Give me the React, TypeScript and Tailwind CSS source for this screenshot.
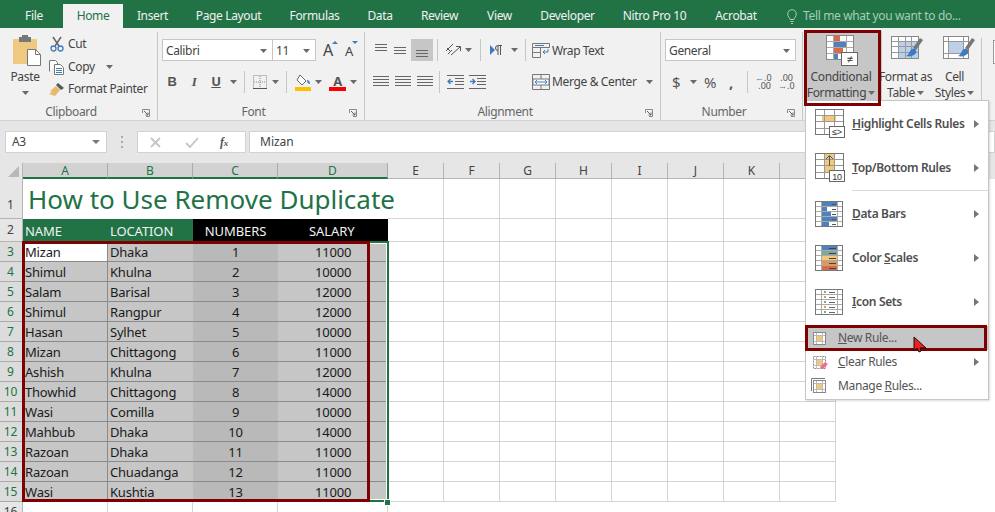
import { ReactNode } from 'react';

const UI = "font-['Noto_Sans','Open_Sans',sans-serif]";

const tabs = [
  { label: 'File', w: 'w-[58px]' },
  { label: 'Home', w: 'w-[60px]', active: true },
  { label: 'Insert', w: 'w-[59px]' },
  { label: 'Page Layout', w: 'w-[93px]' },
  { label: 'Formulas', w: 'w-[79px]' },
  { label: 'Data', w: 'w-[52px]' },
  { label: 'Review', w: 'w-[67px]' },
  { label: 'View', w: 'w-[53px]' },
  { label: 'Developer', w: 'w-[83px]' },
  { label: 'Nitro Pro 10', w: 'w-[91px]' },
  { label: 'Acrobat', w: 'w-[72px]' },
];

const rows = [
  ['Mizan', 'Dhaka', '1', '11000'],
  ['Shimul', 'Khulna', '2', '10000'],
  ['Salam', 'Barisal', '3', '12000'],
  ['Shimul', 'Rangpur', '4', '12000'],
  ['Hasan', 'Sylhet', '5', '10000'],
  ['Mizan', 'Chittagong', '6', '11000'],
  ['Ashish', 'Khulna', '7', '12000'],
  ['Thowhid', 'Chittagong', '8', '14000'],
  ['Wasi', 'Comilla', '9', '10000'],
  ['Mahbub', 'Dhaka', '10', '14000'],
  ['Razoan', 'Dhaka', '11', '11000'],
  ['Razoan', 'Chuadanga', '12', '11000'],
  ['Wasi', 'Kushtia', '13', '11000'],
];

const extraCols = ['E', 'F', 'G', 'H', 'I', 'J', 'K', 'L'];

const Caret = ({ className = '' }: { className?: string }) => (
  <svg width="7" height="4" viewBox="0 0 7 4" className={`shrink-0 ${className}`}>
    <path d="M0 0h7L3.5 4z" fill="#6a6a6a" />
  </svg>
);

const Sep = ({ className = '' }: { className?: string }) => <div className={`w-px h-[22px] bg-[#c6c6c6] shrink-0 ${className}`} />;

const Launcher = () => (
  <svg width="8" height="8" viewBox="0 0 8 8" className="absolute right-[7px] bottom-[3px]">
    <path d="M.5 4V.5H7.5V7.5H4" fill="none" stroke="#8a8a8a" />
    <path d="M2 2L6 6M6 3.5V6H3.5" fill="none" stroke="#666" />
  </svg>
);

// horizontal-lines icon used by the alignment buttons
const Lines = ({ rows: r }: { rows: [number, number][] }) => (
  <svg width="16" height="16" viewBox="0 0 16 16" className="shrink-0">
    {r.map(([x, y], i) => (
      <rect key={i} x={x} y={y} width={16 - x * (x > 0 && x < 3 ? 2 : 1)} height="1" fill="#666" />
    ))}
  </svg>
);

const Group = ({ w, label, children, launcher = true }: { w: string; label: string; children: ReactNode; launcher?: boolean }) => (
  <div className={`${w} relative h-[88px] border-r border-[#c6c6c6] flex flex-col shrink-0`}>
    <div className="flex-1 relative">{children}</div>
    <div className="h-[16px] pr-[15px] text-center text-[12px] leading-[15px] text-[#666]">{label}</div>
    {launcher && <Launcher />}
  </div>
);

const TableGrid = ({ fill }: { fill?: ReactNode }) => (
  <>
    <rect x=".5" y=".5" width="28" height="25" fill="#fff" stroke="#777" />
    {fill}
    <path d="M9.5 1v24M19.5 1v24M1 6.5h27M1 12.5h27M1 19.5h27" stroke="#999" fill="none" />
  </>
);

const MenuIcon = ({ kind }: { kind: string }) => {
  if (kind === 'highlight')
    return (
      <svg width="31" height="30" viewBox="0 0 31 30">
        <TableGrid fill={<rect x="7" y="7" width="14" height="6" fill="#f0c97e" />} />
        <rect x="14.5" y="17.5" width="15" height="11" fill="#fff" stroke="#666" />
        <text x="22" y="26" textAnchor="middle" fontSize="9" fill="#333" fontFamily="'Liberation Sans',sans-serif">≤&gt;</text>
      </svg>
    );
  if (kind === 'top')
    return (
      <svg width="31" height="30" viewBox="0 0 31 30">
        <TableGrid fill={<rect x="9" y="1" width="11" height="18" fill="#f0c97e" />} />
        <path d="M14.500 13V3M11 6l3.500-3.500L18 6" fill="none" stroke="#555" />
        <rect x="14.500" y="17.500" width="15" height="11" fill="#fff" stroke="#666" />
        <text x="22" y="26.500" textAnchor="middle" fontSize="9" fill="#333" fontFamily="'Liberation Sans',sans-serif">10</text>
      </svg>
    );
  if (kind === 'bars')
    return (
      <svg width="29" height="26" viewBox="0 0 29 26">
        <rect x=".5" y=".5" width="27" height="25" fill="#fff" stroke="#777" />
        {[[1, 15], [6, 5], [11, 9], [16, 15], [21, 7]].map(([y, w], i) => (
          <rect key={i} x="7" y={y} width={w} height="4" fill="#4f81bd" />
        ))}
        <path d="M6.500 1v24M22.500 1v24M1 5.500h26M1 10.500h26M1 15.500h26M1 20.500h26" stroke="#aaa" fill="none" />
        <path d="M17 3.500h4M17 8.500h4M17 13.500h4M17 18.500h4M17 23.500h4" stroke="#555" />
      </svg>
    );
  if (kind === 'scales')
    return (
      <svg width="29" height="26" viewBox="0 0 29 26">
        <rect x=".5" y=".5" width="27" height="25" fill="#fff" stroke="#777" />
        {['#4f81bd', '#7fa894', '#f0c97e', '#e8964a', '#d9694a'].map((c, i) => (
          <rect key={c} x="7" y={1 + i * 5} width="15" height="4" fill={c} />
        ))}
        <path d="M6.500 1v24M22.500 1v24M1 5.500h26M1 10.500h26M1 15.500h26M1 20.500h26" stroke="#aaa" fill="none" />
        <path d="M14 3.500h7M14 8.500h7M14 13.500h7M14 18.500h7M14 23.500h7" stroke="#444" />
      </svg>
    );
  return (
    <svg width="29" height="26" viewBox="0 0 29 26">
      <rect x=".5" y=".5" width="27" height="25" fill="#fff" stroke="#777" />
      <path d="M6.500 1v24M22.500 1v24M1 5.500h26M1 10.500h26M1 15.500h26M1 20.500h26" stroke="#aaa" fill="none" />
      {['#7fa894', '#e8964a', '#7fa894', '#e8964a', '#7fa894'].map((c, i) => (
        <rect key={i} x="9" y={2 + i * 5} width="2" height="2" fill={c} />
      ))}
      <path d="M14 3.500h6M14 8.500h6M14 13.500h6M14 18.500h6M14 23.500h6" stroke="#666" />
    </svg>
  );
};

const SmallRuleIcon = ({ kind }: { kind: string }) => (
  <svg width="17" height="16" viewBox="0 0 17 16">
    {kind === 'manage' && <path d="M.5 13V.5H14" fill="none" stroke="#777" />}
    <rect x="2.500" y="2.500" width="12" height="12" fill="#fff" stroke="#888" strokeDasharray={kind === 'clear' ? '2 1' : undefined} />
    <path d="M5.500 3v11M11.500 3v11M3 5.500h11M3 11.500h11" stroke="#bbb" />
    <rect x="6" y="6" width="5" height="5" fill="#f0c97e" />
    {kind === 'clear' && <path d="M9 13l5-5 3 2-5 5h-2z" fill="#ee6f8c" />}
  </svg>
);

const MenuItem = ({ icon, first, rest }: { icon: string; first: ReactNode; rest: string }) => (
  <div className="h-[44px] flex items-center">
    <div className="w-[46px] pl-[9px] shrink-0"><MenuIcon kind={icon} /></div>
    <div className="flex-1 font-semibold text-[12px] text-[#4f4f4f] whitespace-nowrap">{first}{rest}</div>
    <svg width="5" height="8" viewBox="0 0 5 8" className="mr-[9px]"><path d="M0 0l5 4-5 4z" fill="#777" /></svg>
  </div>
);

const SmallItem = ({ kind, children, arrow, className = '' }: { kind: string; children: ReactNode; arrow?: boolean; className?: string }) => (
  <div className={`h-[24px] flex items-center ${className}`}>
    <div className="w-[32px] pl-[5px] shrink-0"><SmallRuleIcon kind={kind} /></div>
    <div className="flex-1 text-[12px]">{children}</div>
    {arrow && <svg width="5" height="8" viewBox="0 0 5 8" className="mr-[9px]"><path d="M0 0l5 4-5 4z" fill="#777" /></svg>}
  </div>
);

const Ribbon = () => (
  <div className="h-[93px] bg-[#f1f1f1] border-b border-[#d2d2d2] flex pt-[4px] text-[#444] overflow-hidden">
    {/* Clipboard */}
    <Group w="w-[158px]" label="Clipboard">
      <div className="absolute left-[10px] top-[3px] w-[30px] flex flex-col items-center">
        <svg width="30" height="31" viewBox="0 0 30 31" className="ml-[4px]">
          <rect x="1" y="4" width="24" height="25" rx="1" fill="#efc881" />
          <rect x="7" y="2" width="12" height="5" fill="#777" />
          <rect x="10" y="0" width="6" height="3" fill="#777" />
          <path d="M15.500 14.500h8l5 5v11h-13z" fill="#fff" stroke="#777" />
          <path d="M23.500 14.500v5h5" fill="none" stroke="#777" />
        </svg>
        <span className="text-[12px] leading-[16px] mt-[3px]">Paste</span>
        <Caret className="mt-[6px]" />
      </div>
      <div className="absolute left-[50px] top-[0px] h-[24px] flex items-center gap-[4px] text-[12px]">
        <svg width="14" height="16" viewBox="0 0 14 16">
          <path d="M3 1l6 9M11 1l-6 9" stroke="#666" strokeWidth="1.500" />
          <circle cx="3.500" cy="12.500" r="2.500" fill="none" stroke="#3f7cbf" strokeWidth="1.300" />
          <circle cx="10.500" cy="12.500" r="2.500" fill="none" stroke="#3f7cbf" strokeWidth="1.300" />
        </svg>
        Cut
      </div>
      <div className="absolute left-[49px] top-[23px] h-[24px] flex items-center text-[12px]">
        <svg width="16" height="15" viewBox="0 0 16 15">
          <path d="M.5 11.500V.5h6l2 2v2" fill="#fff" stroke="#777" />
          <path d="M5.500 4.500h6l3 3v7h-9z" fill="#fff" stroke="#777" />
          <path d="M7 8.500h6M7 10.500h6M7 12.500h6" stroke="#3f7cbf" />
        </svg>
        <span className="ml-[3px]">Copy</span>
        <Caret className="ml-[11px]" />
      </div>
      <div className="absolute left-[49px] top-[45px] h-[24px] flex items-center gap-[3px] text-[12px] whitespace-nowrap">
        <svg width="16" height="15" viewBox="0 0 16 15">
          <path d="M9 1l6 5-3 2-5-5z" fill="#555" />
          <path d="M7 4l4 4-5 6-6-2 3-2-2-1z" fill="#e8b968" />
        </svg>
        Format Painter
      </div>
    </Group>

    {/* Font */}
    <Group w="w-[207px]" label="Font">
      <div className="absolute left-[4px] top-[7px] flex items-center">
        <div className="w-[111px] h-[22px] bg-white border border-[#c6c6c6] flex items-center justify-between pl-[3px] pr-[5px] pt-[1px] text-[12px]">
          Calibri <Caret />
        </div>
        <div className="w-[43px] h-[22px] bg-white border border-l-0 border-[#c6c6c6] flex items-center justify-between pl-[3px] pr-[5px] pt-[1px] text-[12px]">
          11 <Caret />
        </div>
        <div className="relative ml-[7px] text-[16px] leading-[20px]">A<span className="absolute left-[9px] top-[1px] w-0 h-0 border-x-[3px] border-x-transparent border-b-[3px] border-b-[#3f7cbf]" /></div>
        <div className="relative ml-[12px] text-[13px] leading-[20px] mt-[2px]">A<span className="absolute left-[7px] top-[0px] w-0 h-0 border-x-[3px] border-x-transparent border-t-[3px] border-t-[#3f7cbf]" /></div>
      </div>
      <div className="absolute left-[3px] top-[39px] h-[22px] flex items-center text-[13px] text-[#555]">
        <span className="w-[22px] text-center font-bold font-['Liberation_Sans']">B</span>
        <span className="w-[22px] text-center italic font-['Liberation_Serif'] font-bold">I</span>
        <span className="w-[22px] text-center underline font-bold">U</span>
        <Caret className="ml-[3px]" />
        <Sep className="ml-[7px]" />
        <svg width="14" height="14" viewBox="0 0 14 14" className="ml-[8px]">
          <path d="M.5.500h13v13H.5zM7 1v12M1 7h12" stroke="#888" strokeDasharray="1 1" fill="none" />
          <path d="M0 13.500h14" stroke="#555" />
        </svg>
        <Caret className="ml-[5px]" />
        <Sep className="ml-[7px]" />
        <svg width="17" height="17" viewBox="0 0 17 17" className="ml-[8px]">
          <path d="M5 1l6 6-4 4-5-5z" fill="#fff" stroke="#666" />
          <path d="M12 6c2 0 3 2 3 4-2 0-3-2-3-4z" fill="#3f7cbf" />
          <rect x="0" y="13" width="16" height="4" fill="#ffc000" />
        </svg>
        <Caret className="ml-[3px]" />
        <div className="relative ml-[7px] w-[17px] h-[17px] text-center text-[13px] leading-[14px] font-bold">A<span className="absolute left-0 right-0 bottom-0 h-[4px] bg-[#ff0000]" /></div>
        <Caret className="ml-[4px]" />
      </div>
    </Group>

    {/* Alignment */}
    <Group w="w-[296px]" label="Alignment">
      <div className="absolute left-[8px] top-[7px] h-[22px] flex items-center">
        <Lines rows={[[2, 2], [2, 5], [2, 8]]} />
        <div className="ml-[3px]"><Lines rows={[[2, 5], [2, 8], [2, 11]]} /></div>
        <div className="ml-[3px] w-[22px] h-[22px] bg-[#c6c6c6] flex items-center justify-center"><Lines rows={[[2, 8], [2, 11], [2, 14]]} /></div>
        <Sep className="ml-[4px]" />
        <svg width="17" height="16" viewBox="0 0 17 16" className="ml-[7px]">
          <path d="M1 9l7-7M3 12l4-4M2 6l4 4" stroke="#555" fill="none" />
          <path d="M6 13L15 5M11 4.500h4.500V9" stroke="#555" fill="none" />
        </svg>
        <Caret className="ml-[3px]" />
        <Sep className="ml-[8px]" />
        <svg width="13" height="10" viewBox="0 0 13 10" className="ml-[9px]">
          <path d="M0 0l5 5-5 5z" fill="#3f7cbf" />
          <path d="M10.500 1v9M8 1v9M12 .500H8a2.500 2.500 0 0 0 0 5" stroke="#555" fill="none" />
        </svg>
        <Caret className="ml-[8px]" />
        <Sep className="ml-[7px]" />
        <div className="ml-[6px] flex items-center text-[12px] whitespace-nowrap tracking-[-0.45px]">
          <svg width="18" height="15" viewBox="0 0 18 15">
            <path d="M.5.500h17v4H.5zM.5 4.500h8v5h-8zM.5 9.500h8v5h-8z" fill="none" stroke="#777" />
            <path d="M3 2.500h9" stroke="#3f7cbf" />
            <path d="M16 6v3h-5M13 7l-2 2 2 2" fill="none" stroke="#3f7cbf" />
          </svg>
          <span className="ml-[2px] pt-[2px]">Wrap Text</span>
        </div>
      </div>
      <div className="absolute left-[8px] top-[39px] h-[22px] flex items-center">
        <Lines rows={[[0, 2], [0, 5], [0, 8], [0, 11]]} />
        <div className="ml-[6px]"><Lines rows={[[0, 2], [0, 5], [0, 8], [0, 11]]} /></div>
        <div className="ml-[6px]"><Lines rows={[[0, 2], [0, 5], [0, 8], [0, 11]]} /></div>
        <Sep className="ml-[6px]" />
        <svg width="17" height="14" viewBox="0 0 17 14" className="ml-[7px]">
          <path d="M0 .500h17M8 3.500h9M8 6.500h9M8 9.500h9M0 13.500h17" stroke="#666" />
          <path d="M6 6.500H1M3.500 4L1 6.500 3.500 9" stroke="#3f7cbf" fill="none" strokeWidth="1.300" />
        </svg>
        <svg width="17" height="14" viewBox="0 0 17 14" className="ml-[5px]">
          <path d="M0 .500h17M8 3.500h9M8 6.500h9M8 9.500h9M0 13.500h17" stroke="#666" />
          <path d="M1 6.500h5M3.500 4L6 6.500 3.500 9" stroke="#3f7cbf" fill="none" strokeWidth="1.300" />
        </svg>
        <div className="ml-[46px] flex items-center text-[12px] whitespace-nowrap">
          <svg width="18" height="16" viewBox="0 0 18 16">
            <path d="M.5.500h17v15H.5zM.5 5.500h17M.5 10.500h17M9 1v4M9 11v4" fill="none" stroke="#777" />
            <rect x="1" y="5" width="16" height="6" fill="#fff" stroke="#777" />
            <path d="M3 8h12M5 6l-2 2 2 2M13 6l2 2-2 2" fill="none" stroke="#3f7cbf" />
          </svg>
          <span className="ml-[2px]">Merge &amp; Center</span>
          <Caret className="ml-[9px]" />
        </div>
      </div>
    </Group>

    {/* Number */}
    <Group w="w-[142px]" label="Number">
      <div className="absolute left-[4px] top-[7px] w-[131px] h-[22px] bg-white border border-[#c6c6c6] flex items-center justify-between pl-[3px] pr-[5px] pt-[1px] text-[12px]">
        General <Caret />
      </div>
      <div className="absolute left-[7px] top-[39px] h-[22px] flex items-center text-[#555]">
        <span className="w-[16px] text-center text-[15px]">$</span>
        <Caret className="ml-[6px]" />
        <span className="ml-[4px] w-[18px] text-center text-[15px]">%</span>
        <span className="ml-[7px] w-[10px] text-center text-[15px] font-bold leading-[10px]">,</span>
        <Sep className="ml-[11px]" />
        <div className="ml-[7px] w-[16px] text-[9px] leading-[8px] text-right tracking-normal"><span className="text-[#3f7cbf]">←</span>.0<br />.00</div>
        <div className="ml-[7px] w-[15px] text-[9px] leading-[8px] text-right tracking-normal">.00<br /><span className="text-[#3f7cbf]">→</span>.0</div>
      </div>
    </Group>

    {/* Styles */}
    <div className="w-[180px] h-[88px] relative shrink-0 text-[12px] leading-[16px] text-center">
      <div className="absolute left-[1px] top-[-1px] w-[78px] h-[74px] bg-[#c6c6c6] flex flex-col items-center pt-[4px] pr-[4px]">
        <svg width="32" height="32" viewBox="0 0 32 32" className="ml-[2px]">
          <rect x=".5" y=".5" width="27" height="24" fill="#fff" stroke="#888" />
          <rect x="8" y="1" width="6" height="5" fill="#d9694a" />
          <rect x="8" y="7" width="12" height="5" fill="#4f81bd" />
          <rect x="8" y="13" width="9" height="5" fill="#d9694a" />
          <rect x="8" y="19" width="4" height="5" fill="#4f81bd" />
          <path d="M7.500 1v24M20.500 1v24M1 6.500h26M1 12.500h26M1 18.500h26" stroke="#aaa" fill="none" />
          <rect x="15.500" y="17.500" width="16" height="13" fill="#fff" stroke="#666" />
          <text x="23.500" y="28" textAnchor="middle" fontSize="11" fill="#333" fontFamily="'Liberation Sans',sans-serif">≠</text>
        </svg>
        <div className="mt-[2px] whitespace-nowrap">Conditional</div>
        <div className="flex items-center gap-[2px] whitespace-nowrap">Formatting <Caret /></div>
      </div>
      <div className="absolute left-[76px] top-[3px] w-[53px] flex flex-col items-center">
        <svg width="32" height="32" viewBox="0 0 32 32" className="ml-[3px]">
          <rect x=".5" y="1.500" width="27" height="22" fill="#fff" stroke="#888" />
          <rect x="7" y="6" width="20" height="17" fill="#bcd0e8" />
          <path d="M7.500 2v21M14.500 2v21M20.500 2v21M1 6.500h26M1 11.500h26M1 17.500h26" stroke="#999" fill="none" />
          <path d="M29 3l3 2-7 10-3-2z" fill="#777" />
          <path d="M21 14c3-1 5 1 4 4-2 3-6 4-10 3 3-1 3-5 6-7z" fill="#3f7cbf" />
        </svg>
        <div className="mt-[2px] whitespace-nowrap">Format as</div>
        <div className="flex items-center gap-[2px] whitespace-nowrap">Table <Caret /></div>
      </div>
      <div className="absolute left-[128px] top-[3px] w-[47px] flex flex-col items-center">
        <svg width="32" height="32" viewBox="0 0 32 32" className="ml-[8px]">
          <rect x=".5" y="1.500" width="25" height="22" fill="#fff" stroke="#888" />
          <rect x="5" y="6" width="16" height="13" fill="#bcd0e8" />
          <path d="M1 6.500h24M1 18.500h24M5.500 2v21M20.500 2v21" stroke="#999" fill="none" />
          <path d="M29 3l3 2-7 10-3-2z" fill="#777" />
          <path d="M21 14c3-1 5 1 4 4-2 3-6 4-10 3 3-1 3-5 6-7z" fill="#3f7cbf" />
        </svg>
        <div className="mt-[2px] whitespace-nowrap">Cell</div>
        <div className="flex items-center gap-[2px] whitespace-nowrap">Styles <Caret /></div>
      </div>
      <div className="absolute left-[178px] top-[6px] w-px h-[76px] bg-[#c6c6c6]" />
    </div>
    <div className="ml-[10px] mt-[8px] w-[4px] h-[24px] border border-[#999] bg-white shrink-0" />
  </div>
);

const FormulaBar = () => (
  <div className="h-[42px] bg-[#e6e6e6] flex items-start pt-[10px] pl-[5px] text-[12px] text-[#444]">
    <div className="w-[102px] h-[22px] bg-white border border-[#d2d2d2] flex items-center justify-between pl-[6px] pr-[6px]">
      A3
      <svg width="8" height="4" viewBox="0 0 8 4"><path d="M0 0h8L4 4z" fill="#777" /></svg>
    </div>
    <div className="ml-[14px] mr-[14px] h-[22px] flex flex-col justify-center gap-[3px]">
      <span className="w-[2px] h-[2px] bg-[#aaa]" /><span className="w-[2px] h-[2px] bg-[#aaa]" /><span className="w-[2px] h-[2px] bg-[#aaa]" />
    </div>
    <div className="w-[109px] h-[22px] bg-white border border-[#d2d2d2] flex items-center pl-[12px]">
      <svg width="11" height="11" viewBox="0 0 11 11"><path d="M1 1l9 9M10 1l-9 9" stroke="#c6c6c6" strokeWidth="1.800" /></svg>
      <svg width="14" height="11" viewBox="0 0 14 11" className="ml-[24px]"><path d="M1 6l4 4 8-9" stroke="#c6c6c6" strokeWidth="1.800" fill="none" /></svg>
      <span className="ml-[21px] italic font-bold text-[#555] font-['Liberation_Serif']">f<span className="text-[9px]">x</span></span>
    </div>
    <div className="ml-[3px] w-[746px] h-[22px] bg-white border border-[#d2d2d2] flex items-center pl-[10px] tracking-[0px]">Mizan</div>
  </div>
);

const cellW = ['w-[85px]', 'w-[85px]', 'w-[85px]', 'w-[110px]'];

const ColumnHeader = () => (
  <div className="h-[16px] flex bg-[#e6e6e6] text-[12px] leading-[15px] text-center tracking-normal">
    <div className="w-[23px] relative border-r border-[#b5b5b5]">
      <svg width="11" height="11" viewBox="0 0 11 11" className="absolute right-[3px] bottom-[2px]"><path d="M11 0v11H0z" fill="#b8b8b8" /></svg>
    </div>
    {['A', 'B', 'C', 'D'].map((c, i) => (
      <div key={c} className={`${cellW[i]} bg-[#d2d2d2] border-r border-[#ababab] border-b-2 border-b-[#217346] text-[#217346]`}>{c}</div>
    ))}
    {extraCols.map(c => (
      <div key={c} className="w-[56px] shrink-0 border-r border-[#b5b5b5] border-b border-b-[#b5b5b5] text-[#444]">{c}</div>
    ))}
  </div>
);

const RowHead = ({ n, selected, className = '' }: { n: number; selected?: boolean; className?: string }) => (
  <div className={`w-[23px] shrink-0 h-full flex items-center justify-center pr-[1px] text-[12px] tracking-normal border-r border-b ${selected ? 'bg-[#dcdcdc] text-[#217346] border-r-[#217346] border-b-[#ababab]' : 'bg-[#e6e6e6] text-[#444] border-r-[#b5b5b5] border-b-[#b5b5b5]'} ${className}`}>{n}</div>
);

const EmptyCols = () => (
  <>
    {extraCols.map(c => (
      <div key={c} className="w-[56px] shrink-0 h-full border-r border-b border-[#d4d4d4]" />
    ))}
  </>
);

const Sheet = () => (
  <div className="relative">
    <ColumnHeader />
    <div className="h-[40px] flex bg-white">
      <RowHead n={1} className="pt-[12px]" />
      <div className="w-[365px] shrink-0 h-full relative">
        <span className="absolute left-[5px] top-[3px] whitespace-nowrap text-[26px] leading-[35px] tracking-normal text-[#217346]">How to Use Remove Duplicate</span>
      </div>
      <EmptyCols />
    </div>
    <div className="h-[23px] flex bg-white text-[13px] text-[#f2f2f2] tracking-[-0.1px]">
      <RowHead n={2} />
      <div className="w-[85px] shrink-0 bg-[#217346] pl-[2px] leading-[24px]">NAME</div>
      <div className="w-[85px] shrink-0 bg-[#217346] pl-[2px] leading-[24px]">LOCATION</div>
      <div className="w-[85px] shrink-0 bg-black text-center leading-[24px]">NUMBERS</div>
      <div className="w-[110px] shrink-0 bg-black leading-[24px] pl-[31px]">SALARY</div>
      <EmptyCols />
    </div>
    {rows.map((r, i) => (
      <div key={i} className="h-[20px] flex bg-white text-[13px] text-[#1a1a1a] tracking-[-0.2px]">
        <RowHead n={i + 3} selected />
        <div className={`w-[85px] shrink-0 pl-[2px] leading-[20px] border-r border-b border-[#8a8a8a] ${i === 0 ? 'bg-white' : 'bg-[#c6c6c6]'}`}>{r[0]}</div>
        <div className="w-[85px] shrink-0 pl-[2px] leading-[20px] bg-[#c6c6c6] border-b border-[#8a8a8a]">{r[1]}</div>
        <div className="w-[85px] shrink-0 text-center leading-[20px] bg-[#b9b9b9] border-b border-[#8a8a8a]">{r[2]}</div>
        <div className="w-[110px] shrink-0 pl-[37px] leading-[20px] bg-[#c6c6c6] border-b border-[#8a8a8a]">{r[3]}</div>
        <EmptyCols />
      </div>
    ))}
    <div className="h-[20px] flex bg-white">
      <RowHead n={16} />
      <div className="w-[85px] shrink-0 border-r border-[#d4d4d4]" />
      <div className="w-[85px] shrink-0 border-r border-[#d4d4d4]" />
      <div className="w-[85px] shrink-0 border-r border-[#d4d4d4]" />
      <div className="w-[110px] shrink-0 border-r border-[#d4d4d4]" />
    </div>
    {/* selection outline and its fill handle */}
    <div className="absolute left-[22px] top-[78px] w-[367px] h-[261px] border-2 border-[#217346] shadow-[inset_0_0_0_1px_#ffffff] pointer-events-none" />
    <div className="absolute left-[384px] top-[336px] w-[7px] h-[7px] bg-[#217346] border border-white pointer-events-none" />
    {/* red callout around the table */}
    <div className="absolute left-[22px] top-[78px] w-[348px] h-[261px] border-[3px] border-[#7f0000] pointer-events-none" />
  </div>
);

const CfMenu = () => (
  <div className="absolute left-[805px] top-[100px] w-[184px] h-[300px] bg-white border border-[#c6c6c6] text-[#555] shadow-[1px_1px_2px_rgba(0,0,0,0.15)]">
    <div className="pt-[1px]">
      <MenuItem icon="highlight" first={<u>H</u>} rest="ighlight Cells Rules" />
      <MenuItem icon="top" first={<u>T</u>} rest="op/Bottom Rules" />
      <div className="ml-[46px] mb-[1px] h-px bg-[#d8d8d8]" />
      <MenuItem icon="bars" first={<u>D</u>} rest="ata Bars" />
      <MenuItem icon="scales" first={<>Color <u>S</u></>} rest="cales" />
      <MenuItem icon="icons" first={<u>I</u>} rest="con Sets" />
      <div className="mt-[2px] h-[24px]"><SmallItem kind="new" className="bg-[#c6c6c6]"><u>N</u>ew Rule...</SmallItem></div>
      <SmallItem kind="clear" arrow><u>C</u>lear Rules</SmallItem>
      <SmallItem kind="manage">Manage <u>R</u>ules...</SmallItem>
    </div>
  </div>
);

export default function App() {
  return (
    <div className={`relative w-[995px] h-[512px] overflow-hidden bg-white tracking-[-0.35px] ${UI}`}>
      <div className="h-[28px] bg-[#217346] flex items-end text-[12px] text-[#f1f1f1]">
        <div className="w-[5px]" />
        {tabs.map(t => (
          <div
            key={t.label}
            className={`${t.w} h-[24px] shrink-0 flex items-center justify-center ${t.active ? 'bg-[#f1f1f1] text-[#217346]' : ''}`}
          >
            {t.label}
          </div>
        ))}
        <div className="ml-[15px] h-[24px] flex items-center gap-[6px] text-[#a6cdb6] whitespace-nowrap">
          <svg width="10" height="15" viewBox="0 0 10 15">
            <path d="M3 10.500C3 8.500 .7 8 .7 5a4.300 4.300 0 0 1 8.600 0C9.300 8 7 8.500 7 10.500z" fill="none" stroke="#a6cdb6" />
            <path d="M3.500 12.500h3M4 14.500h2" stroke="#a6cdb6" />
          </svg>
          Tell me what you want to do...
        </div>
      </div>
      <Ribbon />
      <FormulaBar />
      <Sheet />
      <CfMenu />
      {/* red callouts on the ribbon button and the menu item */}
      <div className="absolute left-[804px] top-[30px] w-[77px] h-[76px] border-[3px] border-[#7f0000] pointer-events-none" />
      <div className="absolute left-[805px] top-[325px] w-[182px] h-[26px] border-[3px] border-[#7f0000] pointer-events-none" />
      {/* mouse pointer */}
      <svg width="15" height="20" viewBox="0 0 15 20" className="absolute left-[913px] top-[336px]">
        <path d="M1 1v14l3-3 2 4 2-1-1-3h6z" fill="#f02020" stroke="#111" />
      </svg>
    </div>
  );
}
